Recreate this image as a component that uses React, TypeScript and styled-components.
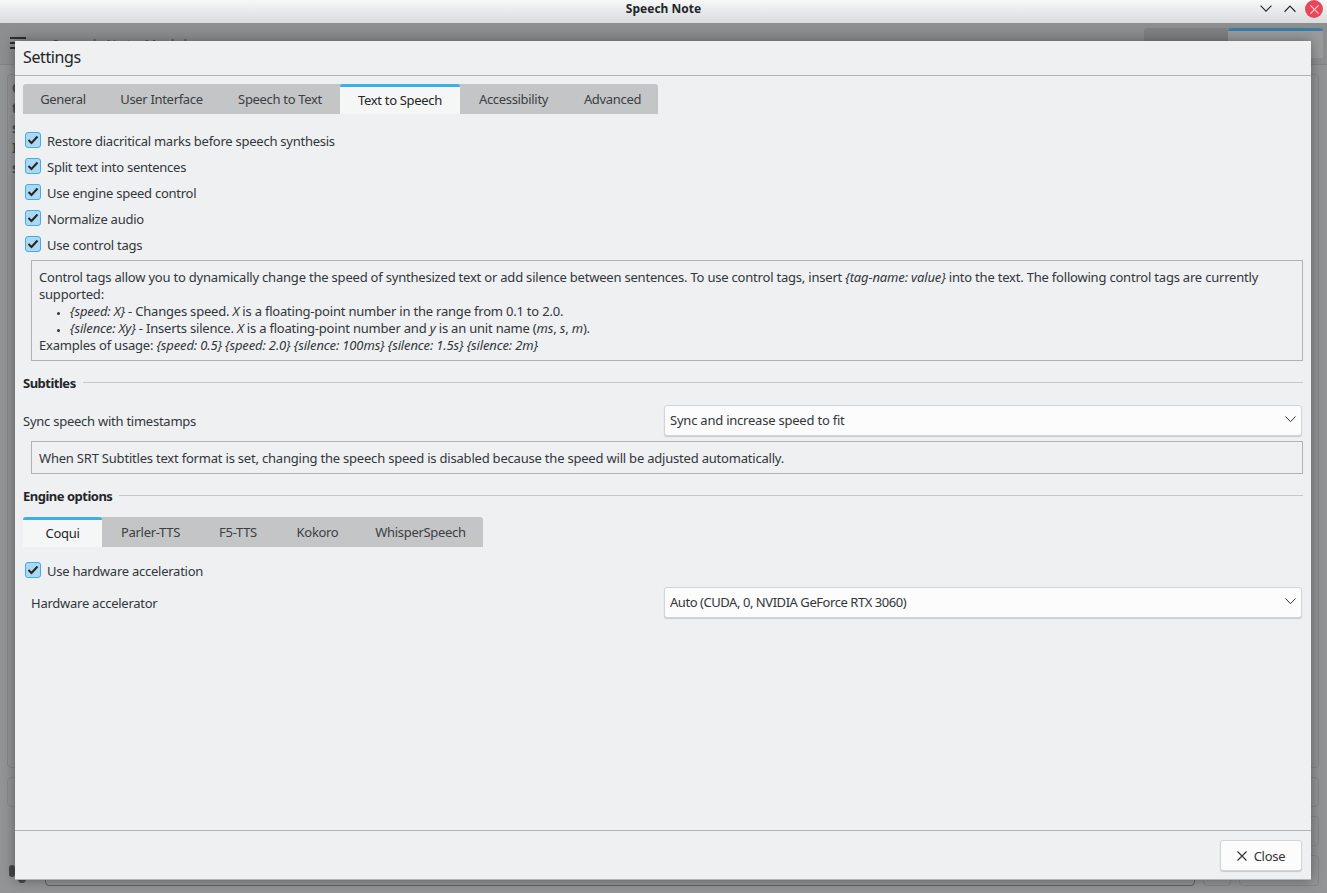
import React from "react";
import styled, { createGlobalStyle } from "styled-components";

const Global = createGlobalStyle`
  html, body {
    margin: 0;
    padding: 0;
    overflow: hidden;
  }
  * {
    box-sizing: border-box;
  }
  body {
    font-family: "Noto Sans", "Open Sans", sans-serif;
    font-size: 13px;
    color: #31363b;
  }
`;

const Shell = styled.div`
  position: relative;
  width: 1327px;
  height: 893px;
  display: flex;
  flex-direction: column;
  background: #939496;
  overflow: hidden;
`;
const TitleBar = styled.header`
  height: 23px;
  flex: none;
  display: flex;
  align-items: center;
  justify-content: center;
  padding-bottom: 6px;
  position: relative;
  background: linear-gradient(#f6f7f7, #dadbdd);
  font-size: 12px;
  font-weight: 700;
  color: #232629;
`;
const WindowButtons = styled.div`
  position: absolute;
  right: 4px;
  top: 0;
  height: 18px;
  display: flex;
  align-items: center;
  gap: 12px;
`;
const CloseDot = styled.span`
  width: 18px;
  height: 18px;
  margin-left: -3px;
  border-radius: 50%;
  background: #e6475a;
  display: flex;
  align-items: center;
  justify-content: center;
`;

/* dimmed main window behind the dialog */
const BackToolbar = styled.div`
  height: 42px;
  flex: none;
  display: flex;
  align-items: flex-end;
  padding: 0 4px 0 10px;
  border-bottom: 1px solid #828385;
  background: #8d8e90;
`;
const Burger = styled.span`
  width: 16px;
  height: 12px;
  margin-bottom: 15px;
  border-top: 2px solid #2d2e30;
  border-bottom: 2px solid #2d2e30;
  position: relative;
  &::after {
    content: "";
    position: absolute;
    left: 0;
    right: 0;
    top: 3px;
    height: 2px;
    background: #2d2e30;
  }
`;
const BackCaption = styled.span`
  margin: 0 auto 11px 26px;
  color: #4a4b4d;
  font-size: 13px;
  letter-spacing: 1px;
`;
const BackTab = styled.span<{ $active?: boolean }>`
  width: ${(p) => (p.$active ? 95 : 84)}px;
  height: 30px;
  margin-bottom: 6px;
  border-radius: 3px 3px 0 0;
  background: ${(p) => (p.$active ? "#9a9b9d" : "#7f8082")};
  border-top: ${(p) => (p.$active ? "3px solid #3b7da3" : "none")};
`;
const BackBody = styled.div`
  flex: 1;
  display: flex;
  flex-direction: column;
  padding: 9px 8px 7px 7px;
  gap: 9px;
`;
const BackPanel = styled.div`
  flex: 1;
  border: 1px solid #858688;
  border-radius: 4px;
  padding: 3px 4px;
  font-size: 14px;
  line-height: 20px;
  color: #47484a;
  font-weight: 600;
`;
const BackRow = styled.div<{ $inset?: boolean }>`
  height: 30px;
  flex: none;
  margin-left: ${(p) => (p.$inset ? 30 : 0)}px;
  border: 1px solid #868789;
  border-radius: 4px;
`;
const BackInputRow = styled.div`
  height: 31px;
  flex: none;
  display: flex;
  gap: 8px;
  padding-left: 2px;
`;
const BackPill = styled.span`
  width: 6px;
  height: 12px;
  margin-top: 10px;
  border-radius: 3px;
  background: #47484a;
`;
const BackDot = styled.span`
  width: 8px;
  height: 8px;
  margin: 20px 11px 0 -5px;
  border-radius: 50%;
  background: #47484a;
`;
const BackInput = styled.div`
  flex: 1;
  border: 1px solid #5f6062;
  border-radius: 4px;
`;
const BackSquare = styled.div<{ $wide?: boolean }>`
  width: ${(p) => (p.$wide ? 80 : 28)}px;
  border: 1px solid #858688;
  border-radius: 4px;
`;

const Dialog = styled.section`
  position: absolute;
  left: 15px;
  top: 41px;
  width: 1296px;
  height: 839px;
  display: flex;
  flex-direction: column;
  background: #eff0f2;
  border-bottom: 1px solid #b5b6b8;
  box-shadow: 0 0 12px rgba(0, 0, 0, 0.38);
  letter-spacing: -0.25px;
`;
const DialogTitle = styled.h1`
  margin: 0;
  height: 35px;
  flex: none;
  padding: 0 8px 2px;
  display: flex;
  align-items: center;
  font-size: 16px;
  font-weight: 400;
  letter-spacing: -0.4px;
  color: #232629;
  border-bottom: 1px solid #b1b2b4;
`;
const DialogBody = styled.div`
  flex: 1;
  display: flex;
  flex-direction: column;
  padding: 8px 8px 0;
`;
const Footer = styled.footer`
  height: 49px;
  flex: none;
  display: flex;
  align-items: flex-start;
  justify-content: flex-end;
  padding: 9px 9px 0;
  border-top: 1px solid #b1b2b4;
`;
const CloseButton = styled.button`
  width: 82px;
  height: 31px;
  display: flex;
  align-items: center;
  justify-content: center;
  gap: 7px;
  padding: 0;
  background: #fcfcfc;
  border: 1px solid #d3d4d6;
  border-radius: 3px;
  box-shadow: 0 1px 1px rgba(0, 0, 0, 0.16);
  font: inherit;
  letter-spacing: -0.25px;
  color: #31363b;
`;

const TabBar = styled.div`
  align-self: flex-start;
  height: 30px;
  display: flex;
  border-radius: 3px 3px 0 0;
  background: #c4c5c7;
  letter-spacing: -0.32px;
`;
const Tab = styled.div<{ $active?: boolean; $width: number }>`
  width: ${(p) => p.$width}px;
  display: flex;
  align-items: center;
  justify-content: center;
  color: ${(p) => (p.$active ? "#232629" : "#3b3e42")};
  background: ${(p) => (p.$active ? "#f5f6f6" : "transparent")};
  border-top: ${(p) => (p.$active ? "3px solid #3daee9" : "none")};
  border-radius: ${(p) => (p.$active ? "3px 3px 0 0" : "0")};
  padding-bottom: ${(p) => (p.$active ? 2 : 0)}px;
`;

const Checks = styled.div<{ $top: number }>`
  margin-top: ${(p) => p.$top}px;
  padding-left: 2px;
  display: flex;
  flex-direction: column;
  gap: 10px;
`;
const CheckRow = styled.label`
  height: 16px;
  display: flex;
  align-items: center;
  gap: 6px;
`;
const CheckText = styled.span`
  padding-top: 2px;
`;
const CheckBox = styled.span`
  width: 16px;
  height: 16px;
  flex: none;
  display: flex;
  align-items: center;
  justify-content: center;
  background: #acd9f1;
  border: 1px solid #3daee9;
  border-radius: 3px;
`;
const InfoBox = styled.div<{ $top: number }>`
  margin: ${(p) => p.$top}px 0 0 8px;
  padding: 8px 7px 6px;
  border: 1px solid #b1b2b4;
  line-height: 17px;
  letter-spacing: -0.205px;
  i {
    letter-spacing: -0.14px;
  }
`;
const InfoList = styled.ul`
  margin: 0;
  padding: 0 0 0 31px;
  li::marker {
    font-size: 9px;
  }
`;
const SectionHead = styled.div`
  margin-top: 14px;
  height: 16px;
  display: flex;
  align-items: center;
  gap: 7px;
  font-weight: 700;
  letter-spacing: -0.5px;
  color: #232629;
  &::after {
    content: "";
    flex: 1;
    height: 1px;
    margin-top: -2px;
    background: #c6c7c9;
  }
`;
const FieldRow = styled.div<{ $top: number; $indent?: boolean }>`
  margin-top: ${(p) => p.$top}px;
  padding: 0 1px 0 ${(p) => (p.$indent ? 8 : 0)}px;
  display: flex;
  align-items: center;
`;
const FieldLabel = styled.span<{ $width: number }>`
  width: ${(p) => p.$width}px;
  flex: none;
`;
const Combo = styled.div<{ $tight?: boolean }>`
  flex: 1;
  height: 31px;
  display: flex;
  align-items: center;
  justify-content: space-between;
  padding: 0 5px 2px;
  background: #fcfcfc;
  border: 1px solid #d3d4d6;
  border-radius: 3px;
  box-shadow: 0 1px 1px rgba(0, 0, 0, 0.16);
  letter-spacing: ${(p) => (p.$tight ? -0.45 : -0.22)}px;
`;
const SectionTabs = styled.div`
  margin-top: 13px;
  display: flex;
`;

const Check = () => (
  <svg width="12" height="10" viewBox="0 0 12 10" fill="none">
    <path d="M1.5 5 L4.5 8 L10.5 1.5" stroke="#232629" strokeWidth="2" />
  </svg>
);
const Chevron = ({ up, size = 11, color = "#31363b" }: { up?: boolean; size?: number; color?: string }) => (
  <svg width={size} height={size * 0.6} viewBox="0 0 11 6.6" fill="none">
    <path d={up ? "M0.5 6.2 L5.5 1 L10.5 6.2" : "M0.5 0.5 L5.5 5.7 L10.5 0.5"} stroke={color} strokeWidth="1" />
  </svg>
);
const Cross = ({ size, color, width = 1.2 }: { size: number; color: string; width?: number }) => (
  <svg width={size} height={size} viewBox="0 0 10 10" fill="none">
    <path d="M0.5 0.5 L9.5 9.5 M9.5 0.5 L0.5 9.5" stroke={color} strokeWidth={width} />
  </svg>
);

const mainTabs = [
  { name: "General", width: 80 },
  { name: "User Interface", width: 117 },
  { name: "Speech to Text", width: 120 },
  { name: "Text to Speech", width: 120, active: true },
  { name: "Accessibility", width: 107 },
  { name: "Advanced", width: 91 },
];
const engineTabs = [
  { name: "Coqui", width: 79, active: true },
  { name: "Parler-TTS", width: 97 },
  { name: "F5-TTS", width: 78 },
  { name: "Kokoro", width: 81 },
  { name: "WhisperSpeech", width: 125 },
];
const ttsChecks = [
  "Restore diacritical marks before speech synthesis",
  "Split text into sentences",
  "Use engine speed control",
  "Normalize audio",
  "Use control tags",
];

type TabItem = { name: string; width: number; active?: boolean };

function Tabs({ items }: { items: TabItem[] }) {
  return (
    <TabBar>
      {items.map((t) => (
        <Tab key={t.name} $width={t.width} $active={t.active}>
          {t.name}
        </Tab>
      ))}
    </TabBar>
  );
}

function CheckItem({ label }: { label: string }) {
  return (
    <CheckRow>
      <CheckBox>
        <Check />
      </CheckBox>
      <CheckText>{label}</CheckText>
    </CheckRow>
  );
}

export default function App() {
  return (
    <Shell>
      <Global />
      <TitleBar>
        Speech Note
        <WindowButtons>
          <Chevron size={12} color="#232629" />
          <Chevron up size={12} color="#232629" />
          <CloseDot>
            <Cross size={9} color="#f7d5d9" />
          </CloseDot>
        </WindowButtons>
      </TitleBar>
      <BackToolbar>
        <Burger />
        <BackCaption>Speech Note Model</BackCaption>
        <BackTab />
        <BackTab $active />
      </BackToolbar>
      <BackBody>
        <BackPanel>
          C<br />t<br />s<br />I<br />s
        </BackPanel>
        <BackRow />
        <BackRow $inset />
        <BackInputRow>
          <BackPill />
          <BackDot />
          <BackInput />
          <BackSquare />
          <BackSquare $wide />
        </BackInputRow>
      </BackBody>

      <Dialog>
        <DialogTitle>Settings</DialogTitle>
        <DialogBody>
          <Tabs items={mainTabs} />
          <Checks $top={18}>
            {ttsChecks.map((c) => (
              <CheckItem key={c} label={c} />
            ))}
          </Checks>
          <InfoBox $top={8}>
            Control tags allow you to dynamically change the speed of synthesized text or add silence between sentences. To use
            control tags, insert <i>{"{tag-name: value}"}</i> into the text. The following control tags are currently supported:
            <InfoList>
              <li>
                <i>{"{speed: X}"}</i> - Changes speed. <i>X</i> is a floating-point number in the range from 0.1 to 2.0.
              </li>
              <li>
                <i>{"{silence: Xy}"}</i> - Inserts silence. <i>X</i> is a floating-point number and <i>y</i> is an unit name (
                <i>ms</i>, <i>s</i>, <i>m</i>).
              </li>
            </InfoList>
            Examples of usage: <i>{"{speed: 0.5} {speed: 2.0} {silence: 100ms} {silence: 1.5s} {silence: 2m}"}</i>
          </InfoBox>
          <SectionHead>Subtitles</SectionHead>
          <FieldRow $top={14}>
            <FieldLabel $width={641}>Sync speech with timestamps</FieldLabel>
            <Combo>
              Sync and increase speed to fit
              <Chevron />
            </Combo>
          </FieldRow>
          <InfoBox $top={5}>
            When SRT Subtitles text format is set, changing the speech speed is disabled because the speed will be adjusted
            automatically.
          </InfoBox>
          <SectionHead>Engine options</SectionHead>
          <SectionTabs>
            <Tabs items={engineTabs} />
          </SectionTabs>
          <Checks $top={15}>
            <CheckItem label="Use hardware acceleration" />
          </Checks>
          <FieldRow $top={9} $indent>
            <FieldLabel $width={633}>Hardware accelerator</FieldLabel>
            <Combo $tight>
              Auto (CUDA, 0, NVIDIA GeForce RTX 3060)
              <Chevron />
            </Combo>
          </FieldRow>
        </DialogBody>
        <Footer>
          <CloseButton>
            <Cross size={10} color="#31363b" />
            Close
          </CloseButton>
        </Footer>
      </Dialog>
    </Shell>
  );
}
